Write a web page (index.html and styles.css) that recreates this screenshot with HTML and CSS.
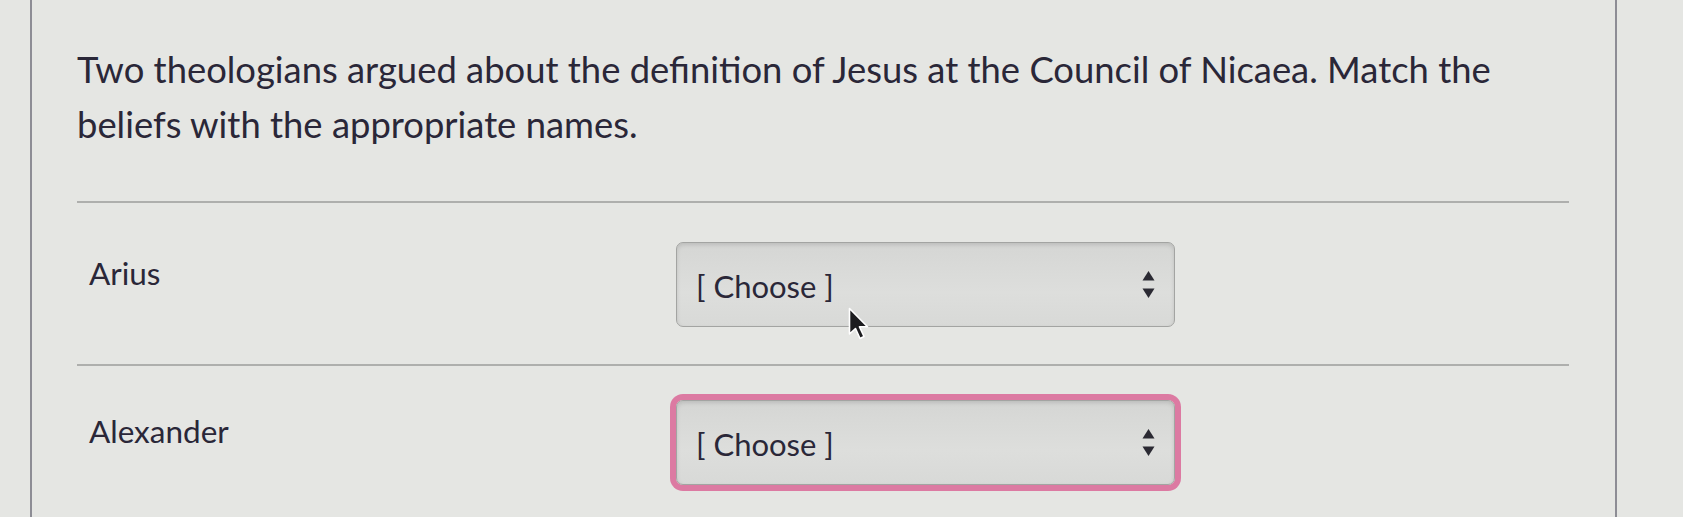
FILE: index.html
```html
<!DOCTYPE html>
<html lang="en">

<head>
    <meta charset="UTF-8">
    <meta name="viewport" content="width=device-width, initial-scale=1.0">
    <title>Matching question</title>
    <link rel="stylesheet" href="styles.css">
</head>

<body>
    <div class="panel">
        <p class="qText">Two theologians argued about the definition of Jesus at the Council of Nicaea. Match the beliefs with the appropriate names.</p>
        <div class="matchRow">
            <div class="matchLabel">Arius</div>
            <div class="pick">
                <span>[ Choose ]</span>
                <svg class="arrows" width="13" height="27" viewBox="0 0 13 27">
                    <path d="M6.5 0 L12.5 9.5 L0.5 9.5 Z" fill="#2b2a33"/>
                    <path d="M6.5 27 L12.5 17.5 L0.5 17.5 Z" fill="#2b2a33"/>
                </svg>
                <!-- mouse pointer sitting over the first box -->
                <svg class="pointer" width="22" height="34" viewBox="0 0 22 34">
                    <path d="M1.5 1.5 L1.5 27 L7.5 21.5 L12 31.5 L16 29.5 L11.5 19.8 L19.5 19.8 Z" fill="#1c1c1f" stroke="#fff" stroke-width="1.6" stroke-linejoin="round"/>
                </svg>
            </div>
        </div>
        <div class="matchRow matchRow--last">
            <div class="matchLabel">Alexander</div>
            <div class="pick pick--error">
                <span>[ Choose ]</span>
                <svg class="arrows" width="13" height="27" viewBox="0 0 13 27">
                    <path d="M6.5 0 L12.5 9.5 L0.5 9.5 Z" fill="#2b2a33"/>
                    <path d="M6.5 27 L12.5 17.5 L0.5 17.5 Z" fill="#2b2a33"/>
                </svg>
            </div>
        </div>
    </div>
</body>

</html>
```

FILE: styles.css
```css
* {
    margin: 0;
    padding: 0;
    box-sizing: border-box;
}

html,
body {
    height: 100%;
}

body {
    background: #e5e6e3;
    font-family: Lato, "Open Sans", sans-serif;
    color: #2a2738;
    overflow: hidden;
}

.panel {
    margin-left: 30px;
    width: 1587px;
    height: 517px;
    border-left: 2px solid #8d8d95;
    border-right: 2px solid #8d8d95;
    padding: 42px 46px 0 45px;
}

.qText {
    font-size: 36.4px;
    line-height: 55px;
    padding-right: 40px;
    padding-bottom: 49px;
    border-bottom: 2px solid #aeafad;
}

.matchRow {
    display: flex;
    align-items: flex-start;
    padding: 39px 0 37px 12px;
    border-bottom: 2px solid #aeafad;
}

.matchRow--last {
    padding-top: 34px;
    border-bottom: 0;
}

.matchLabel {
    width: 587px;
    font-size: 31.5px;
    line-height: 36px;
    margin-top: 13px;
}

.pick {
    position: relative;
    display: flex;
    align-items: center;
    justify-content: space-between;
    width: 499px;
    height: 85px;
    padding: 0 19px 0 19px;
    border: 1px solid #a3a4a2;
    border-radius: 7px;
    background: linear-gradient(#d5d6d4, #dddedc 60%, #d8d9d7);
    box-shadow: inset 0 2px 4px rgba(0, 0, 0, .12);
    font-size: 31px;
}

.pick span {
    margin-top: 3px;
}

.pick--error {
    box-shadow: 0 0 0 6px #dc7aa2, inset 0 2px 4px rgba(0, 0, 0, .12);
}

.pointer {
    position: absolute;
    left: 171px;
    top: 64px;
}
```
